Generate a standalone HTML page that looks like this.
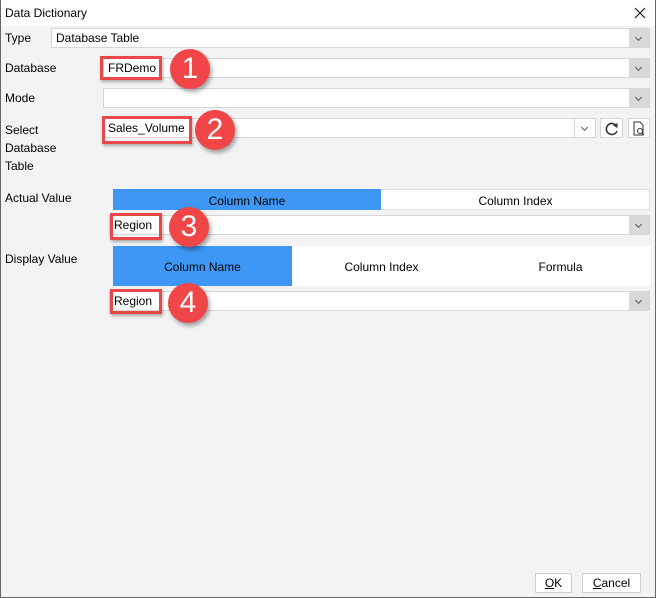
<!DOCTYPE html><html><head><style>
body{margin:0;width:656px;height:598px;overflow:hidden;background:#f3f3f5;font-family:"Liberation Sans",Arial,sans-serif;font-size:12px;color:#000;position:relative}
.a{position:absolute}
.box{position:absolute;background:#fff;border:1px solid #d6d6d6;box-sizing:border-box}
.dd{position:absolute;right:0;top:0;bottom:0;width:20px;background:#d9d9dc}
.dd:after{content:"";position:absolute;left:7px;top:6px;width:4px;height:4px;border-right:1px solid #555;border-bottom:1px solid #555;transform:rotate(45deg)}
.lbl{position:absolute;left:5px;font-size:12px}
.red{position:absolute;border:3px solid #e84848;box-sizing:border-box;box-shadow:1px 2px 3px rgba(0,0,0,.3)}
.c{position:absolute;width:40px;height:40px;border-radius:50%;background:#f04648;color:#fff;font-size:30px;text-align:center;line-height:40px;box-shadow:2px 3px 4px rgba(0,0,0,.35)}
.tab{position:absolute;text-align:center;font-size:12px}
.btn{position:absolute;background:#fff;border:1px solid #d0d0d0;box-sizing:border-box;text-align:center;line-height:18px}
</style></head><body>
<div class="a" style="left:0;top:0;width:656px;height:26px;background:#fff"></div>
<div class="a" style="left:5px;top:6px">Data Dictionary</div>
<svg class="a" style="left:634px;top:7px" width="12" height="12"><path d="M1 1L11 11M11 1L1 11" stroke="#222" stroke-width="1.2"/></svg>
<div class="a" style="left:0;top:0;width:1px;height:598px;background:#666"></div>
<div class="a" style="right:0;top:0;width:1px;height:598px;background:#666"></div>
<div class="a" style="left:0;bottom:0;width:656px;height:1px;background:#666"></div>

<div class="lbl" style="top:31px">Type</div>
<div class="box" style="left:51px;top:28px;width:599px;height:20px"><span class="a" style="left:4px;top:2px">Database Table</span><div class="dd"></div></div>
<div class="lbl" style="top:61px">Database</div>
<div class="box" style="left:103px;top:58px;width:547px;height:20px"><span class="a" style="left:4px;top:2px">FRDemo</span><div class="dd"></div></div>
<div class="lbl" style="top:91px">Mode</div>
<div class="box" style="left:103px;top:88px;width:547px;height:20px"><div class="dd"></div></div>
<div class="lbl" style="top:121px;line-height:18px">Select<br>Database<br>Table</div>
<div class="box" style="left:103px;top:118px;width:493px;height:20px"><span class="a" style="left:4px;top:2px">Sales_Volume</span><div class="dd" style="background:#fff;border-left:1px solid #d6d6d6"></div></div>
<div class="box" style="left:600px;top:118px;width:23px;height:20px"><svg class="a" style="left:3px;top:2px" width="16" height="16"><path d="M12.5 5A5.5 5.5 0 1 0 13 10" fill="none" stroke="#333" stroke-width="1.6"/><path d="M9 4.5L13.5 2L13.5 7Z" fill="#333"/></svg></div>
<div class="box" style="left:628px;top:118px;width:22px;height:20px"><svg class="a" style="left:4px;top:2px" width="14" height="16"><path d="M1 1H7L10 4V14H1Z" fill="none" stroke="#333"/><circle cx="7" cy="10" r="2.5" fill="none" stroke="#333"/><path d="M9 12L11 14" stroke="#333"/></svg></div>

<div class="lbl" style="top:191px">Actual Value</div>
<div class="a" style="left:113px;top:189px;width:537px;height:21px;background:#fff;border:1px solid #e0e0e0;box-sizing:border-box"></div>
<div class="tab" style="left:113px;top:189px;width:268px;height:21px;line-height:25px;background:#3f97f5">Column Name</div>
<div class="tab" style="left:381px;top:189px;width:269px;line-height:25px">Column Index</div>
<div class="box" style="left:109px;top:215px;width:541px;height:20px"><span class="a" style="left:4px;top:2px">Region</span><div class="dd"></div></div>

<div class="lbl" style="top:252px">Display Value</div>
<div class="a" style="left:113px;top:246px;width:537px;height:40px;background:#fff"></div>
<div class="tab" style="left:113px;top:246px;width:179px;height:40px;line-height:42px;background:#3f97f5">Column Name</div>
<div class="tab" style="left:292px;top:246px;width:179px;line-height:42px">Column Index</div>
<div class="tab" style="left:471px;top:246px;width:179px;line-height:42px">Formula</div>
<div class="box" style="left:109px;top:291px;width:541px;height:20px"><span class="a" style="left:4px;top:2px">Region</span><div class="dd"></div></div>

<div class="red" style="left:100px;top:56px;width:62px;height:24px"></div>
<div class="red" style="left:102px;top:116px;width:90px;height:28px"></div>
<div class="red" style="left:110px;top:213px;width:52px;height:27px"></div>
<div class="red" style="left:110px;top:289px;width:52px;height:25px"></div>
<div class="c" style="left:170px;top:49px">1</div>
<div class="c" style="left:195px;top:110px">2</div>
<div class="c" style="left:169px;top:207px">3</div>
<div class="c" style="left:168px;top:283px">4</div>

<div class="btn" style="left:535px;top:573px;width:37px;height:20px"><u>O</u>K</div>
<div class="btn" style="left:582px;top:573px;width:59px;height:20px"><u>C</u>ancel</div>
</body></html>
